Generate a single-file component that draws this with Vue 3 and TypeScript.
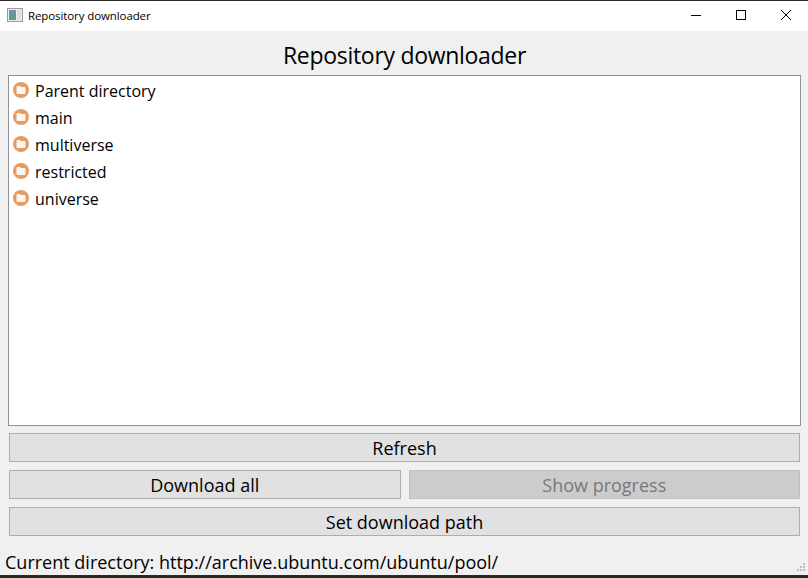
<script setup lang="ts">
const items: string[] = ['Parent directory', 'main', 'multiverse', 'restricted', 'universe']
</script>

<template>
  <div class="window">
    <header class="titlebar">
      <svg class="appicon" width="16" height="16" viewBox="0 0 16 16">
        <rect x="0.5" y="0.5" width="15" height="13" fill="#eef0f0" stroke="#9a9a9a" />
        <rect x="2" y="2" width="7" height="10" fill="#5d9a9a" />
        <rect x="2" y="2" width="7" height="4" fill="#6f8fae" />
        <rect x="10" y="2" width="4" height="10" fill="#d8e2dc" />
      </svg>
      <span class="wintitle">Repository downloader</span>
      <div class="controls">
        <div class="ctl">
          <svg width="12" height="12" viewBox="0 0 12 12"><path d="M1 6.5H11" stroke="#000" fill="none" /></svg>
        </div>
        <div class="ctl">
          <svg width="12" height="12" viewBox="0 0 12 12"><rect x="1.5" y="1.5" width="9" height="9" stroke="#000" fill="none" /></svg>
        </div>
        <div class="ctl">
          <svg width="12" height="12" viewBox="0 0 12 12"><path d="M1 1L11 11M11 1L1 11" stroke="#000" fill="none" /></svg>
        </div>
      </div>
    </header>

    <main class="content">
      <h1 class="heading">Repository downloader</h1>
      <ul class="list">
        <li v-for="item in items" :key="item" class="row">
          <svg class="folder" width="16" height="16" viewBox="0 0 16 16">
            <circle cx="8" cy="8" r="8" fill="#e39c63" />
            <path d="M3.5 5.2Q3.5 4 4.7 4H7L8 5H11.3Q12.5 5 12.5 6.2V10.8Q12.5 12 11.3 12H4.7Q3.5 12 3.5 10.8Z" fill="#fdf6ef" />
          </svg>
          <span>{{ item }}</span>
        </li>
      </ul>
      <div class="actions">
        <button class="btn">Refresh</button>
        <div class="pair">
          <button class="btn">Download all</button>
          <button class="btn off" disabled>Show progress</button>
        </div>
        <button class="btn">Set download path</button>
      </div>
      <footer class="status">
        <span>Current directory: http://archive.ubuntu.com/ubuntu/pool/</span>
        <svg class="grip" width="12" height="12" viewBox="0 0 12 12" fill="#bdbdbd">
          <rect x="8" y="0" width="2" height="2" />
          <rect x="5" y="3" width="2" height="2" />
          <rect x="8" y="3" width="2" height="2" />
          <rect x="2" y="6" width="2" height="2" />
          <rect x="5" y="6" width="2" height="2" />
          <rect x="8" y="6" width="2" height="2" />
        </svg>
      </footer>
    </main>
  </div>
</template>

<style>
html, body { margin: 0; padding: 0; overflow: hidden; }
</style>

<style scoped>
.window {
  width: 808px;
  height: 578px;
  box-sizing: border-box;
  display: flex;
  flex-direction: column;
  background: #f0f0f0;
  border-top: 1px solid #2a2a2a;
  border-bottom: 3px solid #2a2a2a;
  font-family: "Open Sans", "Noto Sans", sans-serif;
  color: #000;
  overflow: hidden;
}
.titlebar {
  height: 30px;
  flex: none;
  background: #fff;
  display: flex;
  align-items: center;
  padding-left: 7px;
  padding-bottom: 2px;
  box-sizing: border-box;
}
.appicon { flex: none; margin-top: 1px; }
.wintitle { margin-left: 5px; font-size: 11.5px; letter-spacing: -0.1px; }
.controls { margin-left: auto; display: flex; }
.ctl {
  width: 45px;
  height: 28px;
  display: flex;
  align-items: center;
  justify-content: center;
}
.content {
  flex: 1;
  min-height: 0;
  display: flex;
  flex-direction: column;
  padding: 0 7px 0 8px;
}
.heading {
  margin: 0;
  height: 44px;
  padding-top: 3px;
  box-sizing: border-box;
  display: flex;
  align-items: center;
  justify-content: center;
  font-size: 23px;
  font-weight: 400;
  letter-spacing: -0.3px;
}
.list {
  list-style: none;
  margin: 0;
  padding: 1px 0 0 4px;
  height: 351px;
  box-sizing: border-box;
  flex: none;
  background: #fff;
  border: 1px solid #8f8f9d;
  font-size: 16px;
}
.row {
  height: 27px;
  display: flex;
  align-items: center;
  gap: 6px;
}
.folder { flex: none; margin-top: -2px; }
.actions {
  margin: 7px 1px 0;
  display: flex;
  flex-direction: column;
  gap: 8px;
}
.pair {
  display: grid;
  grid-template-columns: 1fr 1fr;
  gap: 8px;
}
.btn {
  height: 29px;
  padding: 0;
  background: #e1e1e1;
  border: 1px solid #adadad;
  font: inherit;
  font-size: 18px;
  color: #000;
}
.off {
  background: #cccccc;
  border-color: #bfbfbf;
  color: #787878;
}
.status {
  flex: 1;
  display: flex;
  align-items: flex-end;
  justify-content: space-between;
  margin-left: -3px;
  margin-right: -7px;
  padding-bottom: 1px;
  font-size: 18px;
  line-height: 23px;
}
.grip { flex: none; margin-right: 1px; margin-bottom: -1px; }
</style>
